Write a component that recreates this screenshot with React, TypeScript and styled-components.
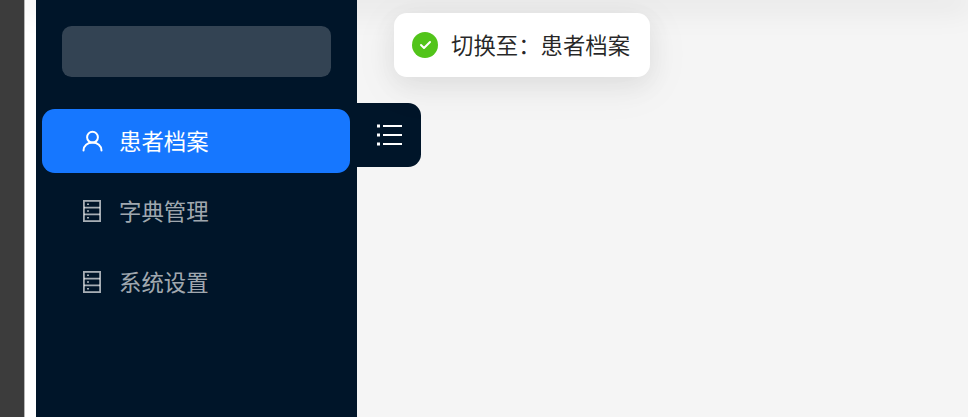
import React from "react";
import styled, { createGlobalStyle } from "styled-components";

const GlobalStyle = createGlobalStyle`
  html, body {
    margin: 0;
    height: 100%;
    overflow: hidden;
    background: #3c3c3c;
    font-family: "Noto Sans CJK SC", "Noto Sans", sans-serif;
  }
  #root {
    height: 100%;
  }
`;

const Page = styled.div`
  display: flex;
  height: 417px;
  padding-left: 24px;
`;

const Frame = styled.div`
  position: relative;
  flex: 1;
  display: flex;
  overflow: hidden;
  padding-left: 11px;
  background: #fff;
  border-left: 1px solid #b5b5b5;
`;

const TopShadow = styled.div`
  position: absolute;
  left: 0;
  right: 0;
  top: 0;
  height: 0;
  box-shadow: 0 0 32px 4px rgba(0, 0, 0, 0.18);
`;

const Sidebar = styled.aside`
  position: relative;
  z-index: 1;
  width: 321px;
  flex-shrink: 0;
  box-sizing: border-box;
  padding: 25.6px 7px 0 6px;
  background: #001529;
`;

const Logo = styled.div`
  height: 51.2px;
  margin: 0 19px 32px 20px;
  border-radius: 9.6px;
  background: rgba(255, 255, 255, 0.2);
`;

const Menu = styled.nav`
  display: flex;
  flex-direction: column;
  gap: 6.7px;
`;

const MenuItem = styled.div<{ $active?: boolean }>`
  display: flex;
  align-items: center;
  gap: 16px;
  height: 64px;
  padding-left: 39px;
  border-radius: 12.8px;
  font-size: 22.4px;
  color: ${(p) => (p.$active ? "#fff" : "rgba(255, 255, 255, 0.65)")};
  background: ${(p) => (p.$active ? "#1677ff" : "transparent")};
  svg {
    flex-shrink: 0;
    width: 22px;
    height: 24px;
  }
`;

const MenuLabel = styled.span`
  padding-bottom: 2px;
`;

const Main = styled.main`
  flex: 1;
  background: #f5f5f5;
`;

const Toggle = styled.button`
  position: absolute;
  z-index: 1;
  left: 332px;
  top: 103px;
  width: 64px;
  height: 64px;
  padding: 0;
  border: 0;
  border-radius: 0 12.8px 12.8px 0;
  background: #001529;
  color: #fff;
  display: flex;
  align-items: center;
  justify-content: center;
`;

const Toast = styled.div`
  position: absolute;
  z-index: 2;
  left: 369px;
  top: 13px;
  height: 64px;
  box-sizing: border-box;
  padding: 0 19.6px 0 18px;
  display: flex;
  align-items: center;
  gap: 13px;
  border-radius: 12.8px;
  background: #fff;
  color: rgba(0, 0, 0, 0.85);
  font-size: 22.4px;
  box-shadow: 0 9px 44px 8px rgba(0, 0, 0, 0.035), 0 6px 25px 0 rgba(0, 0, 0, 0.05),
    0 9px 28px 8px rgba(0, 0, 0, 0.02);
`;

const ToastText = styled.span`
  padding-bottom: 2px;
`;

const UserIcon = () => (
  <svg viewBox="0 0 22 24" fill="none" stroke="currentColor" strokeWidth="2">
    <circle cx="11.5" cy="8.2" r="5.4" />
    <path d="M2.5 21.5c0-4.6 4-7.9 9-7.9s9 3.3 9 7.9" strokeLinecap="round" />
  </svg>
);

const ServerIcon = () => (
  <svg viewBox="0 0 22 24" fill="none" stroke="currentColor" strokeWidth="1.8">
    <rect x="2.9" y="1.9" width="16.2" height="20.2" />
    <path d="M3 8.6h16M3 15.4h16" />
    <path d="M6 5.2h2M6 12h2M6 18.8h2" strokeWidth="1.6" />
  </svg>
);

const ListIcon = () => (
  <svg width="28" height="24" viewBox="0 0 28 24" fill="none" stroke="currentColor" strokeWidth="2">
    <path d="M8 3h19M8 12h19M8 21h19" />
    <path d="M2 3h3M2 12h3M2 21h3" strokeWidth="3" />
  </svg>
);

const CheckIcon = () => (
  <svg width="26" height="26" viewBox="0 0 26 26">
    <circle cx="13" cy="13" r="13" fill="#52c41a" />
    <path d="M9 13l3 3 6-6" fill="none" stroke="#fff" strokeWidth="2" strokeLinecap="round" strokeLinejoin="round" />
  </svg>
);

const items = [
  { label: "患者档案", icon: <UserIcon />, active: true },
  { label: "字典管理", icon: <ServerIcon /> },
  { label: "系统设置", icon: <ServerIcon /> },
];

export default function App() {
  return (
    <>
      <GlobalStyle />
      <Page>
        <Frame>
          <TopShadow />
          <Sidebar>
            <Logo />
            <Menu>
              {items.map((item) => (
                <MenuItem key={item.label} $active={item.active}>
                  {item.icon}
                  <MenuLabel>{item.label}</MenuLabel>
                </MenuItem>
              ))}
            </Menu>
          </Sidebar>
          <Main />
          <Toggle>
            <ListIcon />
          </Toggle>
          <Toast>
            <CheckIcon />
            <ToastText>{"切换至\uFF1A患者档案"}</ToastText>
          </Toast>
        </Frame>
      </Page>
    </>
  );
}
